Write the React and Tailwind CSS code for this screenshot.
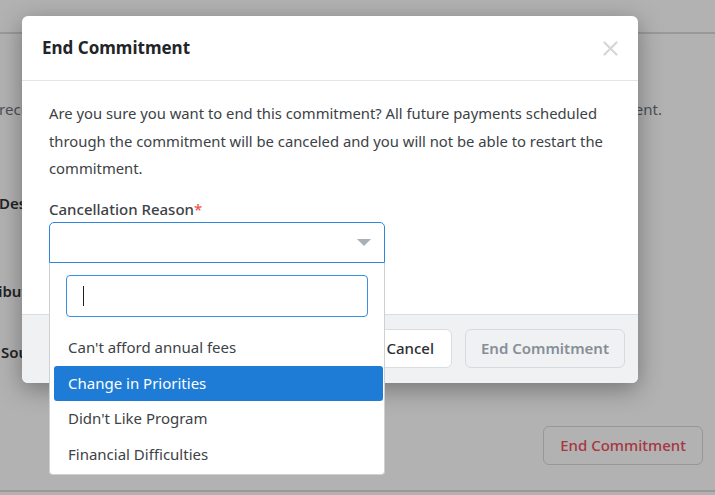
import React from 'react';

const font = { fontFamily: '"Noto Sans", "Open Sans", sans-serif' };

const reasons = [
  "Can't afford annual fees",
  'Change in Priorities',
  "Didn't Like Program",
  'Financial Difficulties',
];

export default function App() {
  return (
    <div className="relative w-[715px] h-[495px] overflow-hidden bg-white text-[15px] text-[#333]" style={font}>
      {/* Page behind the dialog */}
      <div className="h-[34px] border-b-2 border-[#dcdcdc]" />
      <div className="flex flex-col h-[458px] border-b-2 border-[#dcdcdc]">
        <div className="flex justify-between items-center mt-[64px] text-[#6c757d]">
          <span className="-ml-[10px]">Precurring commitment</span>
          <span className="mr-[53px]">of this commitment.</span>
        </div>
        <div className="mt-[71px] font-semibold -ml-[1px]">Description</div>
        <div className="mt-[66px] font-semibold -ml-[37px]">Distribution</div>
        <div className="mt-[38px] font-semibold ml-[1px]">Source</div>
        <div className="flex justify-end mt-[63px] pr-[12px]">
          <button className="h-[39px] px-[16px] rounded-md border border-[#d9d9d9] text-[#ef4f5c] text-[15px] font-medium">
            End Commitment
          </button>
        </div>
      </div>

      {/* Backdrop */}
      <div className="absolute inset-0 bg-black/30" />

      {/* Dialog */}
      <div className="absolute left-[22px] top-[16px] w-[616px] bg-white rounded-md shadow-[0_6px_24px_rgba(0,0,0,0.35)]">
        <div className="flex items-center justify-between h-[65px] px-[20px] border-b border-[#e3e5e8]">
          <h2 className="text-[17px] font-bold text-[#212529]">End Commitment</h2>
          <svg width="15" height="15" viewBox="0 0 15 15" className="mt-[1px]">
            <path d="M1.5 1.5 L13.5 13.5 M13.5 1.5 L1.5 13.5" stroke="#d4d6d9" strokeWidth="2.2" strokeLinecap="round" />
          </svg>
        </div>

        <div className="px-[27px] pt-[19px] pb-[51px]">
          <p className="text-[14.8px] leading-[27.5px] text-[#3d4246]">
            Are you sure you want to end this commitment? All future payments scheduled through the
            commitment will be canceled and you will not be able to restart the commitment.
          </p>
          <div className="mt-[15px] text-[#3d4246] font-medium leading-[22px]">
            Cancellation Reason<span className="text-[#ef5350]">*</span>
          </div>
          <div className="relative mt-[2px] w-[336px]">
            <div className="flex items-center justify-end h-[41px] pr-[13px] border border-[#2f86df] rounded-t-[5px]">
              <svg width="14" height="7" viewBox="0 0 14 7">
                <path d="M0 0 H14 L7 7 Z" fill="#aab0b6" />
              </svg>
            </div>

            {/* Open list */}
            <div className="absolute left-0 top-[41px] w-[336px] bg-white border border-t-0 border-[#ccd1d6] rounded-b-[4px] pb-[1px] z-10">
              <div className="px-[16px] pt-[12px] pb-[13px]">
                <div className="flex items-center h-[42px] px-[16px] border border-[#3a8ee3] rounded-[4px]">
                  <span className="w-[1px] h-[20px] bg-[#222]" />
                </div>
              </div>
              <ul className="pl-[4px] pr-[1px]">
                {reasons.map((r, i) => (
                  <li
                    key={r}
                    className={
                      i === 1
                        ? 'flex items-center h-[35px] pl-[14px] rounded-[3px] bg-[#1e7cd7] text-white'
                        : 'flex items-center h-[36px] pl-[14px] text-[#3d4246]'
                    }
                  >
                    {r}
                  </li>
                ))}
              </ul>
            </div>
          </div>
        </div>

        <div className="flex justify-end gap-[13px] h-[69px] items-center px-[13px] bg-[#f0f1f3] border-t border-[#d9dde2] rounded-b-md">
          <button className="h-[39px] px-[17px] bg-white border border-[#d9dde2] rounded-md text-[#2b2f33] font-medium">
            Cancel
          </button>
          <button className="h-[39px] px-[15px] bg-[#f0f1f3] border border-[#d6dadf] rounded-md text-[#868e96] font-semibold">
            End Commitment
          </button>
        </div>
      </div>
    </div>
  );
}
